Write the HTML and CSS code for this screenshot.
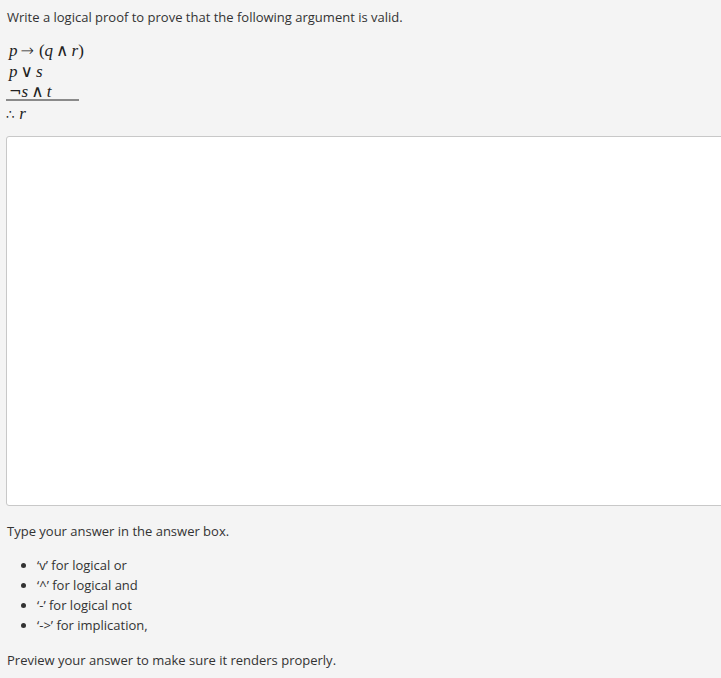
FILE: index.html
```html
<!DOCTYPE html>
<html>
<head>
<meta charset="utf-8">
<link rel="stylesheet" href="styles.css">
</head>
<body>
<div class="page">
  <p class="prompt">Write a logical proof to prove that the following argument is valid.</p>
  <div class="argument">
    <div class="premises">
      <div class="line"><i class="var">p</i><span class="op arrow">→</span><span class="paren">(</span><i class="var">q</i><span class="op">∧</span><i class="var">r</i><span class="paren">)</span></div>
      <div class="line"><i class="var">p</i><span class="op">∨</span><i class="var">s</i></div>
      <div class="line last"><span class="neg">¬</span><i class="var">s</i><span class="op">∧</span><i class="var">t</i></div>
    </div>
    <div class="conclusion"><span class="therefore">∴</span><i class="var">r</i></div>
  </div>
  <textarea class="answer"></textarea>
  <p class="instr">Type your answer in the answer box.</p>
  <ul class="keys">
    <li>‘v’ for logical or</li>
    <li>‘^’ for logical and</li>
    <li>‘-’ for logical not</li>
    <li>‘-&gt;’ for implication,</li>
  </ul>
  <p class="instr">Preview your answer to make sure it renders properly.</p>
</div>
</body>
</html>
```
FILE: styles.css
```css
html, body {
  margin: 0;
  padding: 0;
  background: #f4f4f4;
}
body {
  font-family: "Open Sans", "Noto Sans", sans-serif;
  font-size: 13px;
  color: #333;
  overflow: hidden;
}
.page {
  padding: 7px 0 0 7px;
}
.prompt {
  margin: 0;
  line-height: 20px;
}
.argument {
  margin-top: 13px;
  margin-left: -1px;
  font-family: "DejaVu Serif", serif;
  font-size: 15px;
  color: #222;
}
.var {
  font-family: "Liberation Serif", "Times New Roman", serif;
  font-style: italic;
  font-size: 17px;
}
.paren {
  font-family: "Liberation Serif", serif;
  font-size: 17px;
}
.premises {
  display: block;
  width: 73px;
  border-bottom: 2px solid #8a8a8a;
}
.line {
  height: 21px;
  line-height: 21px;
  padding-left: 3px;
  white-space: nowrap;
}
.line.last {
  height: 17px;
  line-height: 19px;
}
.op {
  margin: 0 3px;
  font-family: "DejaVu Sans", sans-serif;
  font-size: 17px;
}
.arrow {
  font-family: "DejaVu Sans", sans-serif;
  font-weight: 300;
  font-size: 16px;
  margin: 0 5px 0 3px;
}
.neg {
  font-family: "DejaVu Sans", sans-serif;
  font-size: 15px;
}
.conclusion {
  line-height: 18px;
  margin-top: 4px;
  font-size: 14px;
}
.therefore {
  font-family: "DejaVu Sans", sans-serif;
  font-size: 13px;
  margin-right: 5px;
}
.answer {
  display: block;
  box-sizing: border-box;
  width: 740px;
  height: 370px;
  margin: 12px 0 0 -1px;
  border: 1px solid #c8c8c8;
  border-radius: 3px;
  background: #fff;
  resize: none;
}
.instr {
  margin: 15px 0 0 0;
  line-height: 20px;
}
.keys {
  margin: 14px 0 0 0;
  padding-left: 30px;
}
.keys li {
  line-height: 20px;
}
.keys + .instr {
  margin-top: 15px;
}
```
